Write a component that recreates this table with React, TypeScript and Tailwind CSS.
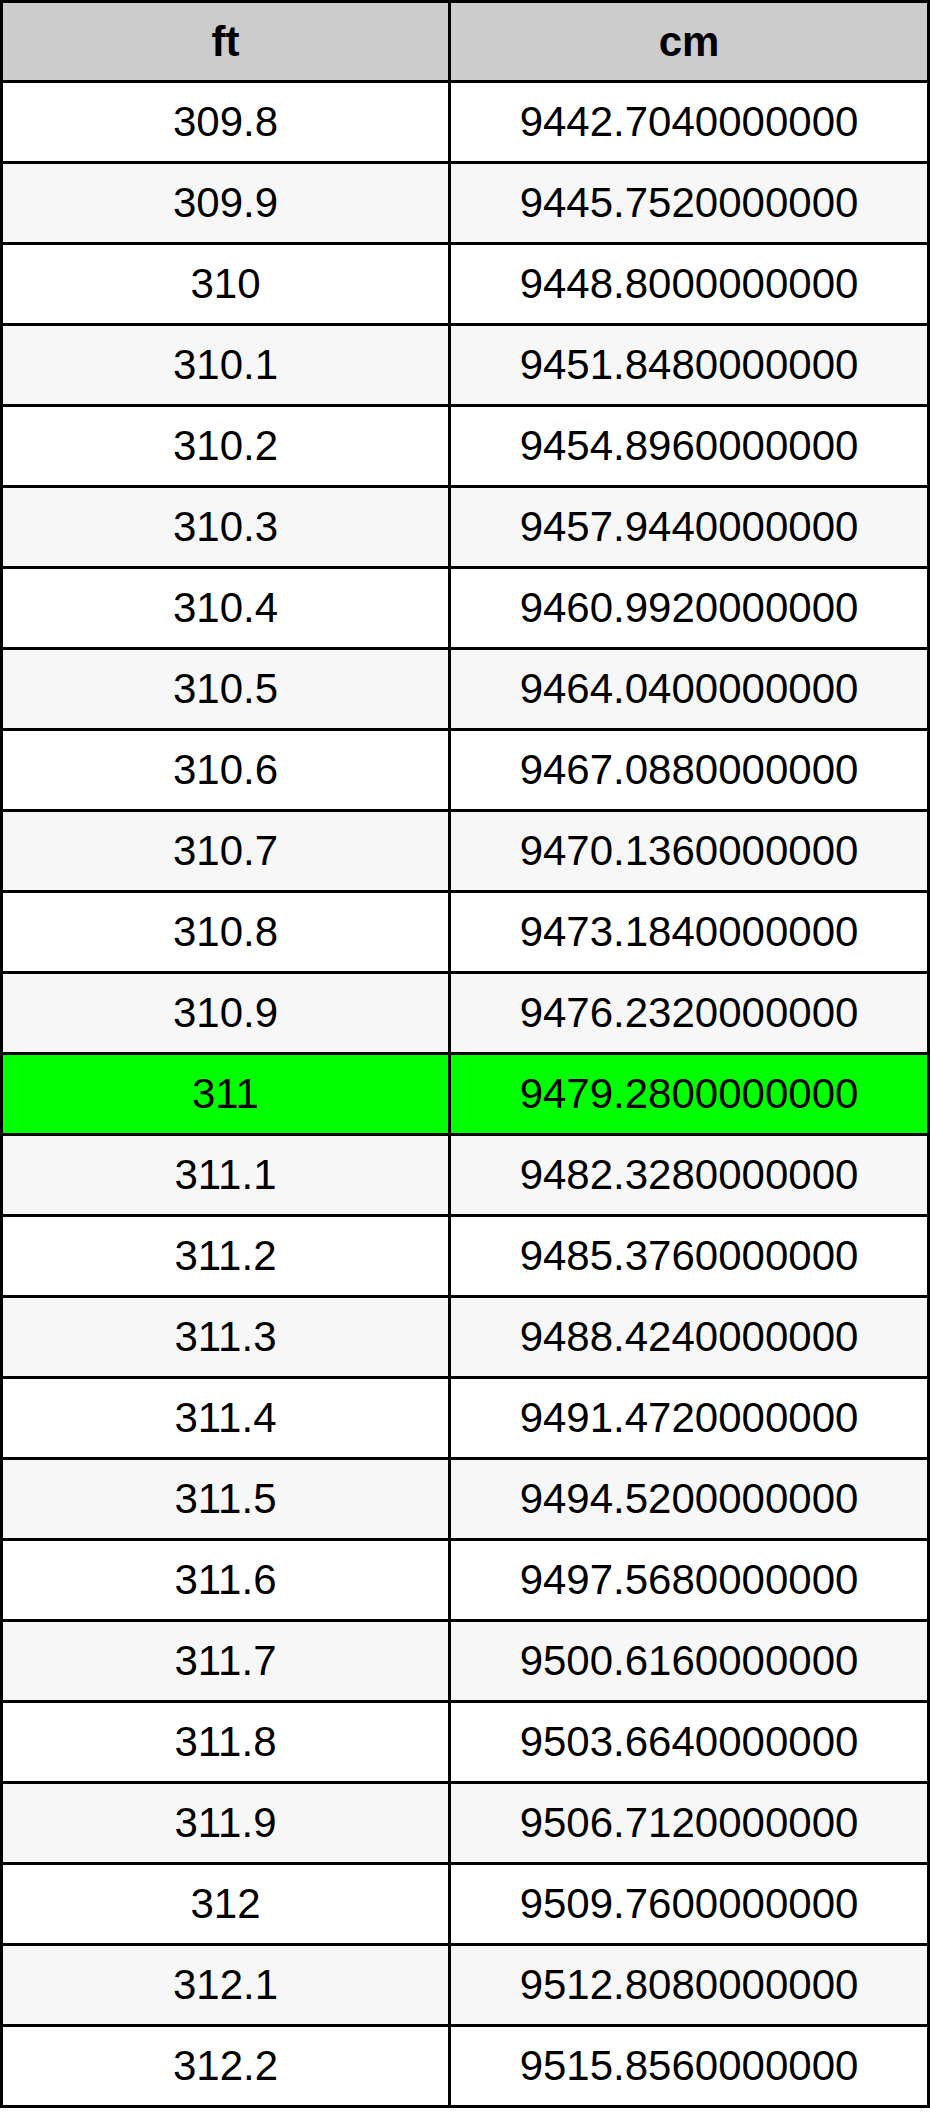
const rows: [string, string][] = [
  ['309.8', '9442.7040000000'],
  ['309.9', '9445.7520000000'],
  ['310', '9448.8000000000'],
  ['310.1', '9451.8480000000'],
  ['310.2', '9454.8960000000'],
  ['310.3', '9457.9440000000'],
  ['310.4', '9460.9920000000'],
  ['310.5', '9464.0400000000'],
  ['310.6', '9467.0880000000'],
  ['310.7', '9470.1360000000'],
  ['310.8', '9473.1840000000'],
  ['310.9', '9476.2320000000'],
  ['311', '9479.2800000000'],
  ['311.1', '9482.3280000000'],
  ['311.2', '9485.3760000000'],
  ['311.3', '9488.4240000000'],
  ['311.4', '9491.4720000000'],
  ['311.5', '9494.5200000000'],
  ['311.6', '9497.5680000000'],
  ['311.7', '9500.6160000000'],
  ['311.8', '9503.6640000000'],
  ['311.9', '9506.7120000000'],
  ['312', '9509.7600000000'],
  ['312.1', '9512.8080000000'],
  ['312.2', '9515.8560000000'],
];

export default function App() {
  return (
    <div className="min-h-[2115px] w-[930px] bg-white font-['Liberation_Sans',Arial,sans-serif] text-black">
      <div className="grid w-[930px] grid-cols-[448px_479px] border-l-[3px] border-t-[3px] border-black text-[42px] leading-none">
        <div className="flex h-[80px] items-center justify-center border-b-[3px] border-r-[3px] border-black bg-[#cccccc] font-bold">
          ft
        </div>
        <div className="flex h-[80px] items-center justify-center border-b-[3px] border-r-[3px] border-black bg-[#cccccc] font-bold">
          cm
        </div>
        {rows.map(([ft, cm], i) => {
          const bg = ft === '311' ? 'bg-[#00ff00]' : i % 2 === 1 ? 'bg-[#f7f7f7]' : 'bg-white';
          return [
            <div
              key={ft + 'a'}
              className={`flex h-[81px] items-center justify-center border-b-[3px] border-r-[3px] border-black ${bg}`}
            >
              {ft}
            </div>,
            <div
              key={ft + 'b'}
              className={`flex h-[81px] items-center justify-center border-b-[3px] border-r-[3px] border-black ${bg}`}
            >
              {cm}
            </div>,
          ];
        })}
      </div>
    </div>
  );
}
